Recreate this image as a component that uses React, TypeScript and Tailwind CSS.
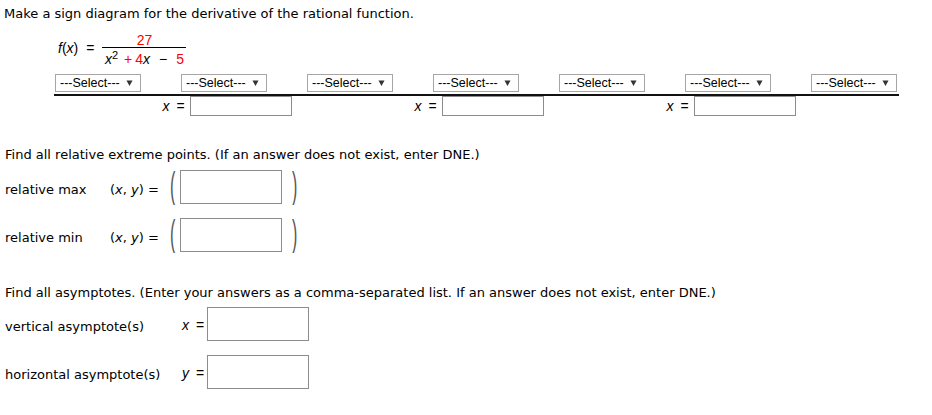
import React from 'react';

const textFont = "font-['Verdana','DejaVu_Sans',sans-serif]";
const mathFont = "font-['Arial','Liberation_Sans',sans-serif]";

const SelectBox: React.FC = () => (
  <div
    className={`w-[86px] h-[18px] border border-[#a6a6a6] bg-white flex items-center pl-[4px] pr-[7px] text-[12.5px] leading-none text-black ${mathFont}`}
  >
    <span className="whitespace-nowrap">---Select---</span>
    <svg width="7" height="7" viewBox="0 0 7 7" className="shrink-0 ml-auto">
      <polygon points="0.5,0.5 6.5,0.5 3.5,6" fill="#333" />
    </svg>
  </div>
);

const Input: React.FC<{ w?: string; h?: string }> = ({ w = 'w-[102px]', h = 'h-[34px]' }) => (
  <div className={`${w} ${h} border border-[#8c8c8c] bg-white shrink-0`} />
);

const Var: React.FC<{ v: string }> = ({ v }) => (
  <span className={`${mathFont} text-[14px] text-black whitespace-nowrap`}>
    <i>{v}</i>
    <span className="ml-[7px]">=</span>
  </span>
);

const Paren: React.FC<{ c: string }> = ({ c }) => (
  <span className={`inline-block scale-y-[2.3] text-[16px] leading-none text-[#555] ${mathFont}`}>{c}</span>
);

const PointRow: React.FC<{ label: string }> = ({ label }) => (
  <div className="flex items-center h-[34px]">
    <span className="w-[105px] pl-[5px] pt-[5px] box-content shrink-0">{label}</span>
    <span className="w-[60px] pt-[5px] shrink-0 whitespace-nowrap">
      (<i>x</i>, <i>y</i>) =
    </span>
    <div className="w-[10px] shrink-0 -mt-[2px]">
      <Paren c="(" />
    </div>
    <Input />
    <div className="ml-[10px] -mt-[2px]">
      <Paren c=")" />
    </div>
  </div>
);

const AsymRow: React.FC<{ label: string; v: string }> = ({ label, v }) => (
  <div className="flex items-center h-[34px]">
    <span className="w-[177px] pl-[5px] pt-[5px] box-content shrink-0">{label}</span>
    <span className="w-[22px] text-right pr-[3px] pt-[3px] box-content shrink-0">
      <Var v={v} />
    </span>
    <Input w="w-[102px]" />
  </div>
);

export default function App() {
  const cols = [0, 1, 2, 3, 4, 5, 6];
  return (
    <div className={`w-[932px] h-[415px] bg-white text-black text-[13px] leading-[16px] ${textFont}`}>
      <div className="pt-[6px] pl-[4px] h-[22px]">Make a sign diagram for the derivative of the rational function.</div>

      {/* f(x) */}
      <div className={`mt-[11px] ml-[58px] h-[41px] flex items-start ${mathFont} text-[14px] leading-[16px]`}>
        <span className="mt-[7px]">
          <i>f</i>(<i>x</i>)
        </span>
        <span className="ml-[8px] mt-[7px]">=</span>
        <div className="ml-[8px] flex flex-col items-center">
          <span className="text-[#ff0000] leading-[14px] h-[14px]">27</span>
          <div className="w-[84px] h-[1px] bg-black" />
          <span className="leading-[16px] pt-[3px] whitespace-nowrap">
            <i>x</i>
            <sup className="text-[11px] -top-[5px]">2</sup>
            <span className="text-[#ff0000] ml-[6px]">+</span>
            <span className="text-[#ff0000] ml-[3px]">4</span>
            <i>x</i>
            <span className="ml-[9px]">−</span>
            <span className="text-[#ff0000] ml-[9px]">5</span>
          </span>
        </div>
      </div>

      {/* sign diagram */}
      <div className="ml-[35px]">
        <div className="flex h-[18px]">
          {cols.map((c) => (
            <div key={c} className="w-[126px] shrink-0 flex justify-center">
              <SelectBox />
            </div>
          ))}
        </div>
        <div className="mt-[2px] ml-[19px] w-[845px] h-[2px] bg-[#111]" />
        <div className="flex h-[20px]">
          {cols.map((c) => (
            <div key={c} className="w-[126px] shrink-0 flex justify-center">
              {c % 2 === 1 && (
                <div className="flex items-center ml-[6px] shrink-0">
                  <span className="mr-[5px]">
                    <Var v="x" />
                  </span>
                  <Input h="h-[20px]" />
                </div>
              )}
            </div>
          ))}
        </div>
      </div>

      <div className="mt-[31px] pl-[5px]">Find all relative extreme points. (If an answer does not exist, enter DNE.)</div>
      <div className="mt-[7px] flex flex-col gap-[14px]">
        <PointRow label="relative max" />
        <PointRow label="relative min" />
      </div>

      <div className="mt-[33px] pl-[5px]">
        Find all asymptotes. (Enter your answers as a comma-separated list. If an answer does not exist, enter DNE.)
      </div>
      <div className="mt-[6px] flex flex-col gap-[14px]">
        <AsymRow label="vertical asymptote(s)" v="x" />
        <AsymRow label="horizontal asymptote(s)" v="y" />
      </div>
    </div>
  );
}
